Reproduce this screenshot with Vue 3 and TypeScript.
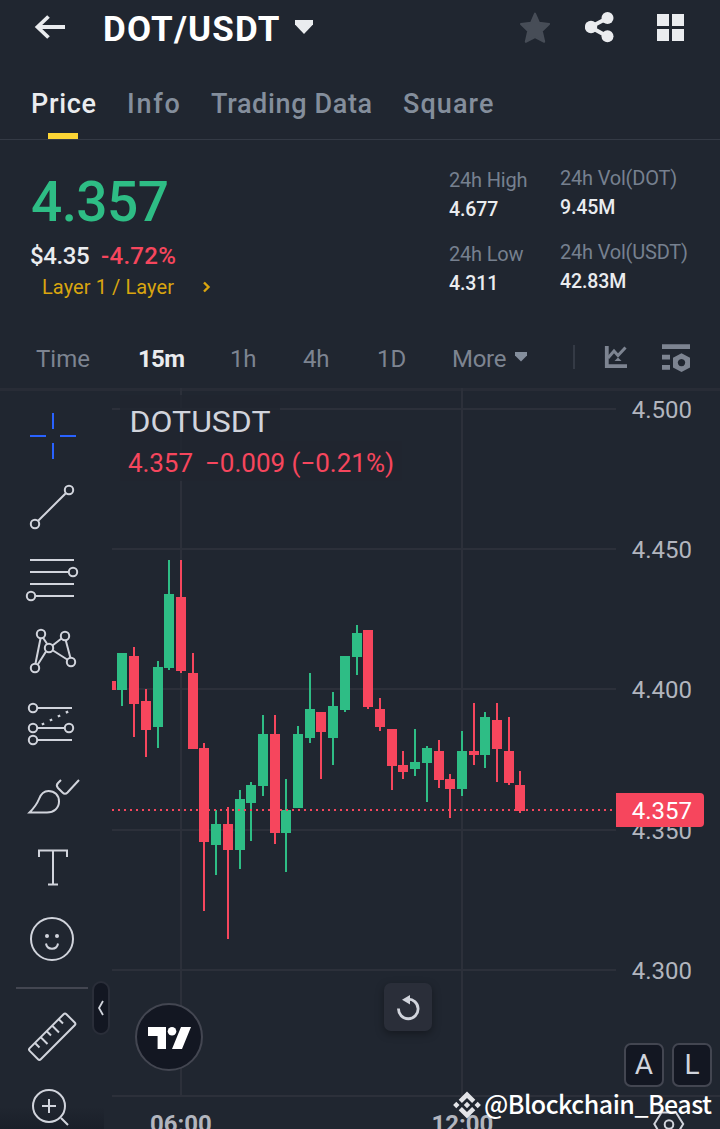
<script setup lang="ts">
type Candle = [up: 0 | 1, x: number, open: number, close: number, high: number, low: number]

const tabs = [
  { name: 'Price', cls: 'tab-price' },
  { name: 'Info', cls: 'tab-info' },
  { name: 'Trading Data', cls: 'tab-trading' },
  { name: 'Square', cls: 'tab-square' },
]

const statColumns = [
  { cls: 'col-range', items: [['24h High', '4.677'], ['24h Low', '4.311']] },
  { cls: 'col-volume', items: [['24h Vol(DOT)', '9.45M'], ['24h Vol(USDT)', '42.83M']] },
]

const candles: Candle[] = [
  [1, 117, 653, 690, 653, 706], [0, 129, 656, 704, 647, 737], [0, 141, 701, 730, 689, 757],
  [1, 153, 667, 727, 661, 748], [1, 164, 594, 668, 560, 670], [0, 176, 597, 671, 560, 673],
  [0, 188, 673, 749, 653, 749], [0, 199, 748, 842, 743, 911], [1, 211, 824, 845, 810, 875],
  [0, 223, 824, 850, 807, 939], [1, 235, 799, 850, 790, 869], [1, 246, 785, 803, 782, 841],
  [1, 258, 734, 786, 715, 796], [0, 270, 734, 833, 715, 844], [1, 281, 810, 833, 779, 872],
  [1, 293, 734, 808, 726, 808], [1, 305, 709, 738, 673, 743], [0, 316, 712, 732, 712, 779],
  [1, 328, 706, 738, 692, 765], [1, 340, 656, 710, 656, 712], [1, 352, 633, 657, 625, 675],
  [0, 363, 630, 707, 630, 709], [0, 375, 709, 727, 698, 731], [0, 387, 729, 766, 729, 790],
  [0, 398, 765, 772, 751, 779], [1, 410, 762, 769, 729, 776], [1, 422, 748, 763, 746, 802],
  [0, 434, 751, 780, 740, 788], [0, 445, 779, 789, 774, 818], [1, 457, 751, 789, 731, 796],
  [0, 469, 751, 755, 703, 765], [1, 480, 717, 755, 712, 768], [0, 492, 720, 749, 703, 782],
  [0, 504, 751, 783, 717, 785], [0, 515, 785, 811, 771, 813],
]

const priceLevels = [
  { label: '4.500', y: 409 },
  { label: '4.450', y: 549 },
  { label: '4.400', y: 689 },
  { label: '4.350', y: 830 },
  { label: '4.300', y: 970 },
]
</script>

<template>
  <div class="screen">
    <header class="topbar">
      <svg class="back" width="32" height="28" viewBox="34 13 32 28">
        <path d="M48.5 16.5 37.5 27l11 10.5M37 27h28" fill="none" stroke="#eaecef" stroke-width="3.8" />
      </svg>
      <h1 class="pair">DOT/USDT</h1>
      <svg class="pair-caret" width="18" height="14" viewBox="0 0 18 14"><path d="M0 0h18v4.5L9 14 0 4.5z" fill="#eaecef" /></svg>
      <svg class="star" width="32" height="32" viewBox="0 0 32 32">
        <path d="m16 1.6 4.1 9.2 10 1.2-7.3 7 2.4 10.8L16 25.2 6.8 29.8 9.2 19 2 12l10-1.2z" fill="#474d57" stroke="#474d57" stroke-width="2" stroke-linejoin="round" />
      </svg>
      <svg class="share" width="30" height="32" viewBox="585 11 30 32" fill="#eaecef">
        <path d="m607.5 18-17 9 17 9.500" fill="none" stroke="#eaecef" stroke-width="4" />
        <circle cx="607.500" cy="18" r="6" /><circle cx="591" cy="27" r="6.200" /><circle cx="607.500" cy="36.300" r="6" />
      </svg>
      <svg class="apps" width="28" height="28" viewBox="0 0 28 28" fill="#eaecef">
        <path d="M0 0h12v12H0zM15 0h12v12H15zM0 15h12v12H0zM15 15h12v12H15z" />
      </svg>
    </header>

    <nav class="tabs">
      <a v-for="(tab, i) in tabs" :key="tab.name" :class="['tab', tab.cls, { active: i === 0 }]">{{ tab.name }}</a>
    </nav>

    <section class="summary">
      <div class="quote">
        <div class="last">4.357</div>
        <div class="fiat"><span class="usd">$4.35</span><span class="change">-4.72%</span></div>
        <div class="tag">
          <span>Layer 1 / Layer</span>
          <svg width="9" height="12" viewBox="0 0 9 12"><path d="m2 1.500 4.500 4.500L2 10.500" fill="none" stroke="#d9a50f" stroke-width="2.400" /></svg>
        </div>
      </div>
      <div v-for="col in statColumns" :key="col.cls" :class="['stats', col.cls]">
        <dl v-for="[name, value] in col.items" :key="name">
          <dt>{{ name }}</dt>
          <dd>{{ value }}</dd>
        </dl>
      </div>
    </section>

    <nav class="intervals">
      <span class="iv time">Time</span>
      <span class="iv m15">15m</span>
      <span class="iv h1">1h</span>
      <span class="iv h4">4h</span>
      <span class="iv d1">1D</span>
      <span class="iv more">More</span>
      <svg class="more-caret" width="12" height="10" viewBox="0 0 12 10"><path d="M0 0h12v3.500L6 9.500 0 3.500z" fill="#848e9c" /></svg>
      <i class="rule"></i>
      <svg class="indicator" width="23" height="24" viewBox="604 345 23 24">
        <path d="M606.800 346v20.200H627" fill="none" stroke="#7d8491" stroke-width="3.800" />
        <path d="m608 358 6-7 4 4.500 7.500-8" fill="none" stroke="#7d8491" stroke-width="3" />
        <path d="m618 357.500 3.500 3.500h-7z" fill="#7d8491" />
      </svg>
      <svg class="settings" width="29" height="30" viewBox="662 343 29 30">
        <path d="M662 344.200h28v4.800h-28zM662 354.800h8v4.600h-8zM662 365h8v4.800h-8z" fill="#7d8491" />
        <path fill-rule="evenodd" d="m681.500 353.200 8.500 4.600v9.600l-8.500 4.600-8.500-4.600v-9.600zM681.500 358.900a3.700 3.700 0 1 0 .01 0z" fill="#7d8491" />
      </svg>
    </nav>

    <main class="chart">
      <aside class="tools">
        <svg viewBox="0 0 104 72" class="tool crosshair"><path d="M53 13v16M53 43v16M30 36h16M60 36h16" /></svg>
        <svg viewBox="0 0 104 72" class="tool"><path d="m38.200 48.800 27.600-27.600" /><circle cx="35" cy="52" r="4.200" /><circle cx="69" cy="18" r="4.200" /></svg>
        <svg viewBox="0 0 104 72" class="tool"><path d="M30 16h44M30 28h38M30 40h44M36 52h38" /><circle cx="73" cy="28" r="4.200" /><circle cx="31" cy="52" r="4.200" /></svg>
        <svg viewBox="0 0 104 72" class="tool">
          <path d="m40.500 22.500-5 25M43.200 22l4 6M52.500 29.500l9-7M65.800 24.500l4.500 17M53 34.500l14.200 9M46 35.500l-8.200 13" />
          <circle cx="41" cy="18" r="4.200" /><circle cx="65" cy="20" r="4.200" /><circle cx="49" cy="32" r="4.200" /><circle cx="35" cy="52" r="4.200" /><circle cx="71" cy="46" r="4.200" />
        </svg>
        <svg viewBox="0 0 104 72" class="tool">
          <path d="M38 20h34M38 40h26M38 52h34" /><path stroke-width="2.400" d="m41.800 36.500 2.400-1M49.800 32.500l2.400-1M57.800 28.500l2.400-1M65.800 24.700l2.400-1" />
          <circle cx="33" cy="20" r="4.200" /><circle cx="33" cy="40" r="4.200" /><circle cx="69" cy="40" r="4.200" /><circle cx="33" cy="52" r="4.200" />
        </svg>
        <svg viewBox="0 0 104 72" class="tool">
          <path d="M29.500 52.500H47C54 52.500 59 48 59 41.500 59 35 54.500 31 48.500 31 43 31 40.500 35 39 39 37 44 33.500 48.500 29.500 52.500z" />
          <path d="m61 20-3 3c-1.400 1.500-1.400 3.500 0 5l4.500 4.500c1.500 1.500 3.500 1.500 5 0L79 20" />
        </svg>
        <svg viewBox="0 0 104 72" class="tool"><path d="M39 25v-6.500h28V25M53 18.500v34M48 52.500h10" /></svg>
        <svg viewBox="0 0 104 72" class="tool"><circle cx="52" cy="35" r="21" /><path d="M46 39.500c1 7 11 7 12 0" /><circle class="dot" cx="47" cy="32" r="2" /><circle class="dot" cx="57" cy="32" r="2" /></svg>
        <hr class="tool-rule" />
        <svg viewBox="0 0 104 72" class="tool">
          <path d="M63.600 14.200a2 2 0 0 1 2.800 0l8.300 8.300a2 2 0 0 1 0 2.800L40.800 59.200a2 2 0 0 1-2.800 0l-8.300-8.300a2 2 0 0 1 0-2.800zM35.500 43.500l4 4M41 37.500l6.500 6.500M47 31.500l4 4M52.500 26l6.500 6.500M59 19.500l4 4" />
        </svg>
        <svg viewBox="0 0 104 72" class="tool"><circle cx="49" cy="34" r="16" /><path d="M42 34h14M49 27v14M61 46l7 7" /></svg>
      </aside>

      <svg class="plot" width="616" height="741" viewBox="104 388 616 741">
        <g class="grid">
          <path v-for="level in priceLevels" :key="level.label" :d="`M112 ${level.y}H616`" />
          <path d="M112 1096H720M181 388V1096M462 388V1096" />
        </g>
        <rect class="legend-bg" x="120" y="395" width="160" height="46" />
        <rect class="legend-bg" x="120" y="441" width="282" height="40" />

        <rect class="down" x="112" y="681" width="4" height="9" />
        <g v-for="[up, x, open, close, high, low] in candles" :key="x" :class="up ? 'up' : 'down'">
          <rect :x="x + 4" :y="high" width="2" :height="low - high" />
          <rect :x="x" :y="open" width="10" :height="close - open" />
        </g>
        <path class="last-line" d="M112 810H616" />

        <text class="symbol" x="129.500" y="432" textLength="141" lengthAdjust="spacingAndGlyphs">DOTUSDT</text>
        <text class="delta" x="128" y="472" textLength="65">4.357</text>
        <text class="delta" x="205" y="472" textLength="189">−0.009 (−0.21%)</text>

        <text v-for="level in priceLevels" :key="level.label" class="axis" x="631.800" :y="level.y + 9">{{ level.label }}</text>
        <path class="price-tag" d="M616 793h84a4 4 0 0 1 4 4v26a4 4 0 0 1-4 4h-84z" />
        <text class="axis tag-text" x="631.800" y="819">4.357</text>
        <text class="axis hour" x="150" y="1132">06:00</text>
        <text class="axis hour" x="431.500" y="1132">12:00</text>

        <circle cx="169" cy="1037" r="33" fill="#131722" stroke="#434651" stroke-width="2" />
        <path d="M148 1027h18v22h-8.400v-13H148zM181 1027h10l-9 22h-10z" fill="#fff" /><circle cx="172" cy="1031.300" r="4.300" fill="#fff" />

        <rect class="reset" x="384" y="983" width="48" height="48" rx="7" />
        <path d="M398.500 1008.500a9.800 9.800 0 1 0 9-9.300" fill="none" stroke="#d1d4dc" stroke-width="2.800" />
        <path d="m402 999.800 8-4.800v9.500z" fill="#d1d4dc" />

        <g class="scale-button">
          <rect x="625" y="1044" width="38" height="42" rx="6" /><text x="644" y="1074">A</text>
          <rect x="673" y="1044" width="38" height="42" rx="6" /><text x="692" y="1074">L</text>
        </g>
        <path d="m661.500 1112.500-7.200 11.500 7.200 12h14.500l7.200-12-7.200-11.500z" fill="none" stroke="#d1d4dc" stroke-width="2" />
        <circle cx="669" cy="1124.500" r="4.300" fill="none" stroke="#d1d4dc" stroke-width="2" />

        <g class="watermark">
          <g transform="translate(467 1105)">
            <path d="m0-13.500 8.300 8.300-3.200 3.200L0-7.100-5.100-2-8.300-5.200zM0 13.500l8.300-8.300L5.100 2 0 7.100-5.100 2l-3.200 3.200zM-10.700-3.200l3.200 3.200-3.200 3.200L-13.900 0zM10.700-3.200 13.900 0l-3.200 3.200L7.500 0zM0-3.200 3.200 0 0 3.200-3.200 0z" />
          </g>
          <text x="484" y="1114" textLength="228">@Blockchain_Beast</text>
        </g>
      </svg>

      <button class="collapse" aria-label="Collapse">
        <svg width="6" height="16" viewBox="0 0 6 16"><path d="M5 1 1 8l4 7" fill="none" stroke="#d1d4dc" stroke-width="1.800" /></svg>
      </button>
    </main>
  </div>
</template>

<style>
html, body { margin: 0; background: #202630; }
</style>

<style scoped>
* { box-sizing: border-box; }
.screen { width: 720px; height: 1129px; overflow: hidden; background: #202630; color: #eaecef; font-family: Roboto, "Liberation Sans", sans-serif; display: flex; flex-direction: column; }
svg { display: block; flex: none; }

.topbar { height: 70px; display: flex; align-items: flex-start; flex: none; }
.back { margin: 13px 0 0 34px; }
.pair { flex: none; margin: 8px 0 0 37px; width: 192px; font-size: 35px; line-height: 44px; font-weight: 700; letter-spacing: 1.15px; color: #fff; }
.pair-caret { margin-top: 20px; }
.star { margin: 12px 0 0 206px; }
.share { margin: 11px 0 0 34px; }
.apps { margin: 14px 0 0 42px; }

.tabs { height: 70px; flex: none; display: flex; border-bottom: 1px solid #343a45; }
.tab { position: relative; flex: none; line-height: 32px; padding-top: 18px; font-size: 27px; font-weight: 500; color: #848e9c; white-space: nowrap; }
.tab.active { color: #eaecef; }
.tab.active::after { content: ""; position: absolute; left: 17px; bottom: 0; width: 30px; height: 6px; background: #fcd535; }
.tab-price { margin-left: 31px; width: 96px; letter-spacing: 0.7px; }
.tab-info { width: 84px; letter-spacing: 1.800px; }
.tab-trading { width: 192px; letter-spacing: 0.65px; }
.tab-square { letter-spacing: 1.100px; }

.summary { height: 190px; flex: none; display: flex; }
.quote { width: 449px; padding: 29px 0 0 31px; white-space: nowrap; }
.last { font-size: 55px; line-height: 66px; font-weight: 500; color: #2ebd85; letter-spacing: -0.6px; }
.fiat { display: flex; font-size: 24px; line-height: 30px; font-weight: 500; margin: 6px 0 0 -1px; }
.usd { width: 71px; letter-spacing: -0.4px; }
.change { color: #f6465d; letter-spacing: 0.300px; }
.tag { display: flex; align-items: center; gap: 28px; margin: 2px 0 0 11px; font-size: 20px; line-height: 28px; color: #d9a50f; }
.tag span { letter-spacing: 0.08px; }
.stats { width: 111px; padding-top: 26px; white-space: nowrap; }
.col-volume { padding-top: 24px; }
dl { margin: 0; height: 74px; }
dt { font-size: 20px; line-height: 29px; letter-spacing: -0.2px; color: #76808f; }
dd { margin: 0; font-size: 19.500px; line-height: 29px; font-weight: 500; letter-spacing: -0.1px; color: #eaecef; }

.intervals { height: 58px; flex: none; display: flex; font-size: 24px; line-height: 28px; color: #7d8491; padding-top: 15px; }
.iv { flex: none; }
.time { margin-left: 36px; width: 102px; }
.m15 { width: 92px; font-weight: 700; letter-spacing: -0.7px; color: #eaecef; }
.h1 { width: 73px; letter-spacing: -0.3px; }
.h4 { width: 74px; letter-spacing: -0.2px; }
.d1 { width: 75px; }
.more { width: 63px; letter-spacing: -0.3px; }
.more-caret { margin-top: 7px; }
.rule { width: 2px; height: 24px; background: #343a45; margin-left: 46px; }
.indicator { margin-left: 29px; }
.settings { margin: -2px 0 0 35px; }

.chart { height: 741px; flex: none; position: relative; display: flex; border-top: 3px solid #282c36; }
.tools { width: 104px; flex: none; padding-top: 9px; background: linear-gradient(#202630 716px, #191e28 741px); }
.tool { width: 104px; height: 72px; fill: none; stroke: #d1d4dc; stroke-width: 2; }
.crosshair { stroke: #2962ff; }
.dot { fill: #d1d4dc; stroke: none; }
.tool-rule { height: 2px; margin: 11px 16px; border: 0; background: #434651; }
.plot { margin-top: -3px; }
.grid path { stroke: #2c303a; stroke-width: 2; fill: none; }
.legend-bg { fill: #202630; fill-opacity: 0.8; }
.up { fill: #2ebd85; }
.down { fill: #f6465d; }
.last-line { stroke: #f6465d; stroke-width: 2; stroke-dasharray: 2 4; }
.symbol { font-size: 30px; fill: #d1d4dc; }
.delta { font-size: 26px; fill: #f6465d; }
.axis { font-size: 24px; fill: #b2b5be; }
.price-tag { fill: #f6465d; }
.tag-text { fill: #fff; }
.hour { font-weight: 700; }
.reset { fill: #2a2e39; filter: drop-shadow(0 3px 4px rgba(0, 0, 0, 0.35)); }
.scale-button rect { fill: #131722; stroke: #434651; stroke-width: 2; }
.scale-button text { font-size: 28px; fill: #d1d4dc; text-anchor: middle; }
.watermark path { fill: #e3e4e8; }
.watermark text { font-family: "Noto Sans CJK SC", sans-serif; font-size: 25px; font-weight: 500; fill: #fff; }
.collapse { position: absolute; left: 92px; top: 590px; width: 18px; height: 54px; border: 2px solid #2a2e39; border-radius: 9px; background: #131722; padding: 0; display: flex; align-items: center; justify-content: center; }
</style>
